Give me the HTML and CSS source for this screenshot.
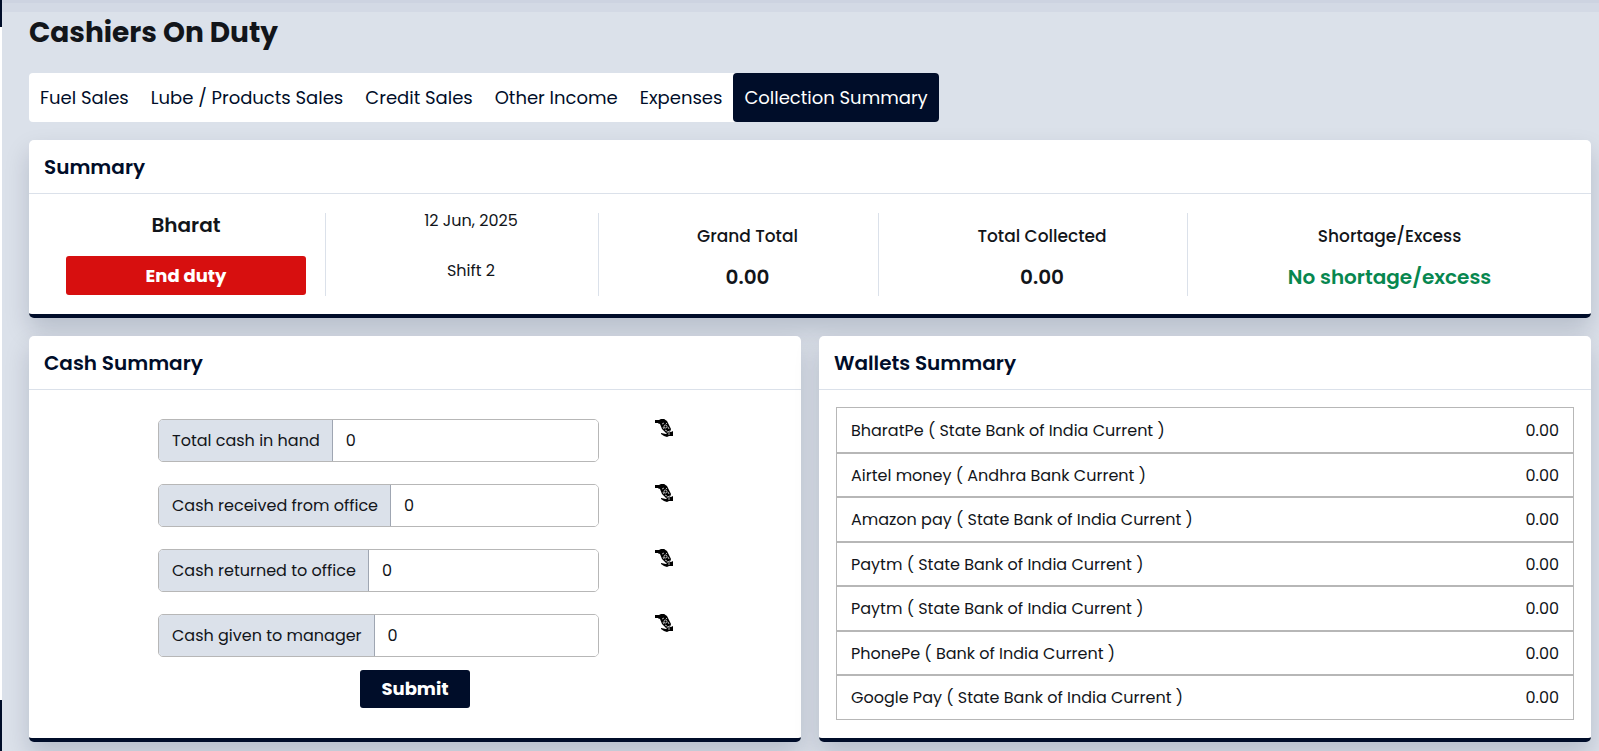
FILE: index.html
```html
<!DOCTYPE html>
<html lang="en">
<head>
<meta charset="utf-8">
<meta name="viewport" content="width=device-width, initial-scale=1">
<title>Cashiers On Duty</title>
<link rel="stylesheet" href="styles.css">
</head>
<body>
<svg class="defs" aria-hidden="true">
  <symbol id="cash-hands" viewBox="0 0 18 18">
    <path d="M0 1h4l2-1h3l1 2-3 2-3 1-1-1H0z"/>
    <path d="M5 1l4-1 3 2 4 8-1 3-4 1-4-4-2-5z"/>
    <path d="M18 12v5h-4l-2 1-3-1-3-2v-1l5 1 2-2h3z"/>
    <circle class="light" cx="10.500" cy="7.500" r="1.500"/>
    <path class="light" d="M7 5l2-1M11 4l1 1M8 8l1 2M13 8l1 2M10 11l2 1M12 13l3-1"/>
    <path class="light" d="M14 13v3"/>
  </symbol>
</svg>
<div class="layout">
  <aside class="sidebar"><div class="sidebar-panel"></div></aside>
  <main class="page">
    <h1 class="page-title">Cashiers On Duty</h1>
    <nav class="tabs">
      <a class="tab" href="#">Fuel Sales</a>
      <a class="tab" href="#">Lube / Products Sales</a>
      <a class="tab" href="#">Credit Sales</a>
      <a class="tab" href="#">Other Income</a>
      <a class="tab" href="#">Expenses</a>
      <a class="tab tab-active" href="#" aria-current="page">Collection Summary</a>
    </nav>

    <section class="card">
      <h2 class="card-header">Summary</h2>
      <div class="summary">
        <div class="stat">
          <p class="name">Bharat</p>
          <button class="btn btn-danger" type="button">End duty</button>
        </div>
        <div class="stat stat-shift">
          <p>12 Jun, 2025</p>
          <p>Shift 2</p>
        </div>
        <div class="stat stat-total">
          <p class="stat-label">Grand Total</p>
          <p class="stat-value">0.00</p>
        </div>
        <div class="stat stat-total">
          <p class="stat-label">Total Collected</p>
          <p class="stat-value">0.00</p>
        </div>
        <div class="stat stat-total">
          <p class="stat-label">Shortage/Excess</p>
          <p class="stat-value stat-ok">No shortage/excess</p>
        </div>
      </div>
    </section>

    <div class="columns">
      <section class="card">
        <h2 class="card-header">Cash Summary</h2>
        <form class="cash-form">
          <div class="cash-row">
            <div class="input-group">
              <label for="in-hand">Total cash in hand</label>
              <input id="in-hand" type="text" value="0">
            </div>
            <svg class="cash-icon" aria-hidden="true"><use href="#cash-hands"/></svg>
          </div>
          <div class="cash-row">
            <div class="input-group">
              <label for="received">Cash received from office</label>
              <input id="received" type="text" value="0">
            </div>
            <svg class="cash-icon" aria-hidden="true"><use href="#cash-hands"/></svg>
          </div>
          <div class="cash-row">
            <div class="input-group">
              <label for="returned">Cash returned to office</label>
              <input id="returned" type="text" value="0">
            </div>
            <svg class="cash-icon" aria-hidden="true"><use href="#cash-hands"/></svg>
          </div>
          <div class="cash-row">
            <div class="input-group">
              <label for="given">Cash given to manager</label>
              <input id="given" type="text" value="0">
            </div>
            <svg class="cash-icon" aria-hidden="true"><use href="#cash-hands"/></svg>
          </div>
          <button class="btn btn-submit" type="submit">Submit</button>
        </form>
      </section>

      <section class="card">
        <h2 class="card-header">Wallets Summary</h2>
        <div class="wallets">
          <table class="wallet-table">
            <tbody>
              <tr><td>BharatPe ( State Bank of India Current )</td><td class="amount">0.00</td></tr>
              <tr><td>Airtel money ( Andhra Bank Current )</td><td class="amount">0.00</td></tr>
              <tr><td>Amazon pay ( State Bank of India Current )</td><td class="amount">0.00</td></tr>
              <tr><td>Paytm ( State Bank of India Current )</td><td class="amount">0.00</td></tr>
              <tr><td>Paytm ( State Bank of India Current )</td><td class="amount">0.00</td></tr>
              <tr><td>PhonePe ( Bank of India Current )</td><td class="amount">0.00</td></tr>
              <tr><td>Google Pay ( State Bank of India Current )</td><td class="amount">0.00</td></tr>
            </tbody>
          </table>
        </div>
      </section>
    </div>
  </main>
</div>
</body>
</html>
```
FILE: styles.css
```css
:root {
  --navy: #000d29;
  --surface: #dbe1ea;
  --ink: #12151a;
  --line: #b7b7b7;
}

* { box-sizing: border-box; }

body {
  margin: 0;
  background: var(--surface);
  color: var(--ink);
  font: 16px/24px Poppins, Inter, "Open Sans", sans-serif;
}

h1, h2, p { margin: 0; }

.defs { position: absolute; width: 0; height: 0; }

.layout { display: flex; min-height: 100vh; }

.sidebar {
  display: flex;
  width: 2px;
  padding: 27px 0 51px;
  background: var(--navy);
}
.sidebar-panel { flex: 1; background: #fff; }

.page {
  flex: 1;
  min-width: 0;
  padding: 13px 8px 9px 27px;
  box-shadow: inset 0 3px 0 #cdd3e1, inset 0 12px 0 #d3d9e5;
}

.page-title {
  margin-bottom: 20px;
  font-size: 28px;
  line-height: 40px;
  font-weight: 700;
}

.tabs {
  display: flex;
  width: fit-content;
  margin-bottom: 18px;
  border-radius: 4px;
  background: #fff;
}
.tab {
  padding: 13px 11px 12px;
  border-radius: 4px;
  color: var(--navy);
  font-size: 18px;
  text-decoration: none;
  white-space: nowrap;
}
.tab-active { background: var(--navy); color: #fff; }

.card {
  border-bottom: 4px solid var(--navy);
  border-radius: 5px;
  background: #fff;
  box-shadow: 0 12px 24px rgba(0, 16, 48, .17);
}
.card-header {
  padding: 13px 15px 12px;
  border-bottom: 1px solid var(--surface);
  color: var(--navy);
  font-size: 20px;
  line-height: 28px;
  font-weight: 600;
}

.summary {
  display: grid;
  grid-template-columns: 279fr 273fr 280fr 309fr 385fr;
  padding: 19px 18px 18px;
}
.stat {
  display: flex;
  flex-direction: column;
  min-height: 83px;
  text-align: center;
}
.stat:not(:last-child) { border-right: 1px solid var(--surface); }
.stat:not(:first-child) { padding-left: 18px; }
.name { margin-bottom: 19px; font-size: 20px; font-weight: 600; }
.stat-shift { gap: 34px; }
.stat-shift p { line-height: 16px; }
.stat-total { padding-top: 11px; gap: 17px; }
.stat-label { font-size: 17px; font-weight: 500; }
.stat-value { font-size: 20px; font-weight: 600; }
.stat-ok { color: #07874f; }

.btn {
  border: 0;
  border-radius: 3px;
  color: #fff;
  font: inherit;
  font-size: 18px;
  font-weight: 700;
}
.btn-danger { margin: 0 19px; padding: 8px 12px 7px; background: #d70f0f; }
.btn-submit {
  justify-self: center;
  width: 110px;
  padding: 7px 12px;
  background: var(--navy);
}

.columns {
  display: grid;
  grid-template-columns: 1fr 1fr;
  gap: 18px;
  margin-top: 18px;
}

.cash-form { display: grid; padding: 29px 0; }
.cash-row {
  display: grid;
  grid-template-columns: 129fr 441fr 202fr;
  margin-bottom: 22px;
}
.cash-row:nth-child(4) { margin-bottom: 13px; }
.input-group {
  display: flex;
  grid-column: 2;
  height: 43px;
  border: 1px solid var(--line);
  border-radius: 5px;
  overflow: hidden;
}
.input-group label {
  padding: 9px 12px 8px 13px;
  border-right: 1px solid #9fa6b2;
  background: var(--surface);
  white-space: nowrap;
}
.input-group input {
  flex: 1;
  min-width: 0;
  padding: 0 13px;
  border: 0;
  background: #fff;
  color: inherit;
  font: inherit;
}
.cash-icon { width: 18px; height: 18px; margin-left: 56px; fill: #000; }
.light { fill: none; stroke: #fff; stroke-width: .7; }

.wallets { padding: 17px 17px 18px; }
.wallet-table {
  width: 100%;
  border: 1px solid var(--line);
  border-collapse: collapse;
}
.wallet-table td { height: 45px; padding: 2px 14px 0; border-bottom: 2px solid var(--line); }
.wallet-table tr:nth-child(even) td { height: 44px; }
.wallet-table tr:last-child td { border-bottom-width: 1px; }
.wallet-table .amount { text-align: right; }
```
